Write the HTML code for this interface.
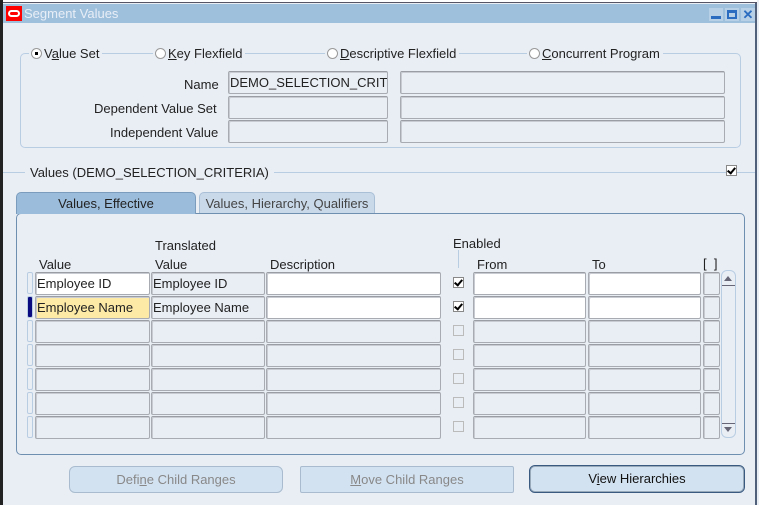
<!DOCTYPE html>
<html><head><style>
*{box-sizing:border-box;margin:0;padding:0}
body{width:759px;height:505px;background:#e9eef5;font-family:"Liberation Sans",sans-serif;font-size:13px;color:#222;position:relative;overflow:hidden}
.a{position:absolute}
.f{position:absolute;height:23px;border:1px solid #a8acb2;border-top-color:#9a9ea4;border-radius:2px;background:#e9eef5;box-shadow:inset 1px 1px 0 #c8ccd2;padding:3px 1px;white-space:nowrap;overflow:hidden;font-size:13px}
.w{background:#fff}
.y{background:#fdeaa7}
.l{position:absolute;white-space:nowrap}
.cb{position:absolute;width:11px;height:11px;border:1px solid #bbb;background:#e9eef5}
.cb.on{border-color:#888;background:#fff}
.cb.on:after{content:"";position:absolute;left:2px;top:0px;width:3px;height:6px;border:solid #000;border-width:0 2px 2px 0;transform:rotate(40deg)}
.rad{position:absolute;width:11px;height:11px;border:1px solid #999;border-radius:50%;background:#fff}
.btn{position:absolute;height:27px;border:1px solid #a9bccf;border-radius:6px;background:#d3e2f1;color:#888;text-align:center;line-height:25px;font-size:13px}
</style></head><body>
<div class="a" style="left:0;top:0;width:3px;height:505px;background:#222"></div>
<div class="a" style="left:755px;top:3px;width:2px;height:502px;background:#50607a"></div>
<div class="a" style="left:3px;top:0;width:754px;height:3px;background:#fff;border-bottom:1px solid #556"></div>
<div class="a" style="left:3px;top:4px;width:752px;height:19px;background:#9fc0dd"></div>
<div class="a" style="left:6px;top:6px;width:16px;height:15px;background:#f00"><div class="a" style="left:2px;top:4px;width:12px;height:7px;border:2px solid #fff;border-radius:4px"></div></div>
<div class="l" style="left:24px;top:6px;color:#e8eef6;font-size:13px">Segment Values</div>
<div class="a" style="left:709px;top:8px;width:14px;height:13px;background:#b8d0e6"><div class="a" style="left:2px;top:8px;width:10px;height:3px;background:#2a6cc0"></div></div>
<div class="a" style="left:725px;top:8px;width:14px;height:13px;background:#b8d0e6"><div class="a" style="left:2px;top:2px;width:10px;height:9px;border:2px solid #2a6cc0;border-top-width:3px"></div></div>
<div class="a" style="left:741px;top:8px;width:14px;height:13px;background:#b8d0e6;color:#2a6cc0;font-weight:bold;font-size:13px;line-height:13px;text-align:center">✕</div>

<div class="a" style="left:20px;top:53px;width:721px;height:95px;border:1px solid #b9cde2;border-radius:5px"></div>
<div class="l" style="left:29px;top:46px;background:#e9eef5;padding:0 3px 0 15px">V<u>a</u>lue Set</div>
<div class="rad" style="left:31px;top:48px"><div class="a" style="left:3px;top:3px;width:3px;height:3px;background:#000"></div></div>
<div class="l" style="left:153px;top:46px;background:#e9eef5;padding:0 3px 0 15px"><u>K</u>ey Flexfield</div>
<div class="rad" style="left:155px;top:48px"></div>
<div class="l" style="left:325px;top:46px;background:#e9eef5;padding:0 3px 0 15px"><u>D</u>escriptive Flexfield</div>
<div class="rad" style="left:327px;top:48px"></div>
<div class="l" style="left:527px;top:46px;background:#e9eef5;padding:0 3px 0 15px"><u>C</u>oncurrent Program</div>
<div class="rad" style="left:529px;top:48px"></div>
<div class="l" style="left:184px;top:77px">Name</div>
<div class="l" style="left:94px;top:101px">Dependent Value Set</div>
<div class="l" style="left:110px;top:125px">Independent Value</div>
<div class="f" style="left:228px;top:71px;width:160px">DEMO_SELECTION_CRITERIA</div>
<div class="f" style="left:228px;top:96px;width:160px"></div>
<div class="f" style="left:228px;top:120px;width:160px"></div>
<div class="f" style="left:400px;top:71px;width:325px"></div>
<div class="f" style="left:400px;top:96px;width:325px"></div>
<div class="f" style="left:400px;top:120px;width:325px"></div>

<div class="a" style="left:3px;top:172px;width:752px;height:1px;background:#b9cde2"></div>
<div class="l" style="left:25px;top:165px;background:#e9eef5;padding:0 5px">Values (DEMO_SELECTION_CRITERIA)</div>
<div class="cb on" style="left:726px;top:165px;background:#fff"></div>

<div class="a" style="left:16px;top:213px;width:729px;height:242px;border:1px solid #6f8fb0;border-radius:5px"></div>
<div class="a" style="left:16px;top:192px;width:180px;height:22px;background:#9cbcdb;border:1px solid #7b9cbd;border-bottom:none;border-radius:5px 5px 0 0;text-align:center;line-height:22px">Values, Effective</div>
<div class="a" style="left:199px;top:192px;width:176px;height:21px;background:#c9d9ea;border:1px solid #a9bfd6;border-bottom:none;border-radius:5px 5px 0 0;text-align:center;line-height:21px;color:#444">Values, Hierarchy, Qualifiers</div>

<div class="l" style="left:155px;top:238px">Translated</div>
<div class="l" style="left:39px;top:257px">Value</div>
<div class="l" style="left:155px;top:257px">Value</div>
<div class="l" style="left:270px;top:257px">Description</div>
<div class="l" style="left:453px;top:236px">Enabled</div>
<div class="a" style="left:458px;top:250px;width:1px;height:18px;background:#b9cde2"></div>
<div class="l" style="left:477px;top:257px">From</div>
<div class="l" style="left:592px;top:257px">To</div>
<div class="l" style="left:703px;top:256px">[&nbsp;&nbsp;]</div>

<div id="rows"></div>
<div class="a" style="left:721px;top:270px;width:15px;height:168px;border:1px solid #b9cde2;border-radius:6px"></div>
<div class="a" style="left:724px;top:276px;width:0;height:0;border:4px solid transparent;border-bottom:5px solid #667;border-top:none"></div>
<div class="a" style="left:722px;top:285px;width:13px;height:1px;background:#667"></div>
<div class="a" style="left:722px;top:423px;width:13px;height:1px;background:#667"></div>
<div class="a" style="left:724px;top:427px;width:0;height:0;border:4px solid transparent;border-top:5px solid #667;border-bottom:none"></div>

<div class="btn" style="left:69px;top:466px;width:214px">Defi<u>n</u>e Child Ranges</div>
<div class="btn" style="left:300px;top:466px;width:214px;border-radius:2px"><u>M</u>ove Child Ranges</div>
<div class="btn" style="left:529px;top:465px;width:216px;height:28px;border:1px solid #3a5a80;color:#111;box-shadow:inset 0 0 0 1px #9ab">V<u>i</u>ew Hierarchies</div>

<script>
var h='',tops=[272,296,320,344,368,392,416];
tops.forEach(function(t,i){
 var v=i==0?'Employee ID':i==1?'Employee Name':'';
 h+='<div class="a" style="left:27px;top:'+(t)+'px;width:6px;height:22px;border:1px solid #b9cde2;border-radius:2px;background:'+(i==1?'#0a0a80':'#e9eef5')+'"></div>';
 h+='<div class="f '+(i==0?'w':i==1?'y':'')+'" style="left:35px;top:'+t+'px;width:115px">'+v+'</div>';
 h+='<div class="f" style="left:151px;top:'+t+'px;width:114px">'+v+'</div>';
 h+='<div class="f '+(i<2?'w':'')+'" style="left:266px;top:'+t+'px;width:175px"></div>';
 h+='<div class="cb'+(i<2?' on':'')+'" style="left:453px;top:'+(t+5)+'px"></div>';
 h+='<div class="f '+(i<2?'w':'')+'" style="left:473px;top:'+t+'px;width:113px"></div>';
 h+='<div class="f '+(i<2?'w':'')+'" style="left:588px;top:'+t+'px;width:113px"></div>';
 h+='<div class="f" style="left:703px;top:'+t+'px;width:17px"></div>';
});
document.getElementById('rows').innerHTML=h;
</script>
</body></html>
